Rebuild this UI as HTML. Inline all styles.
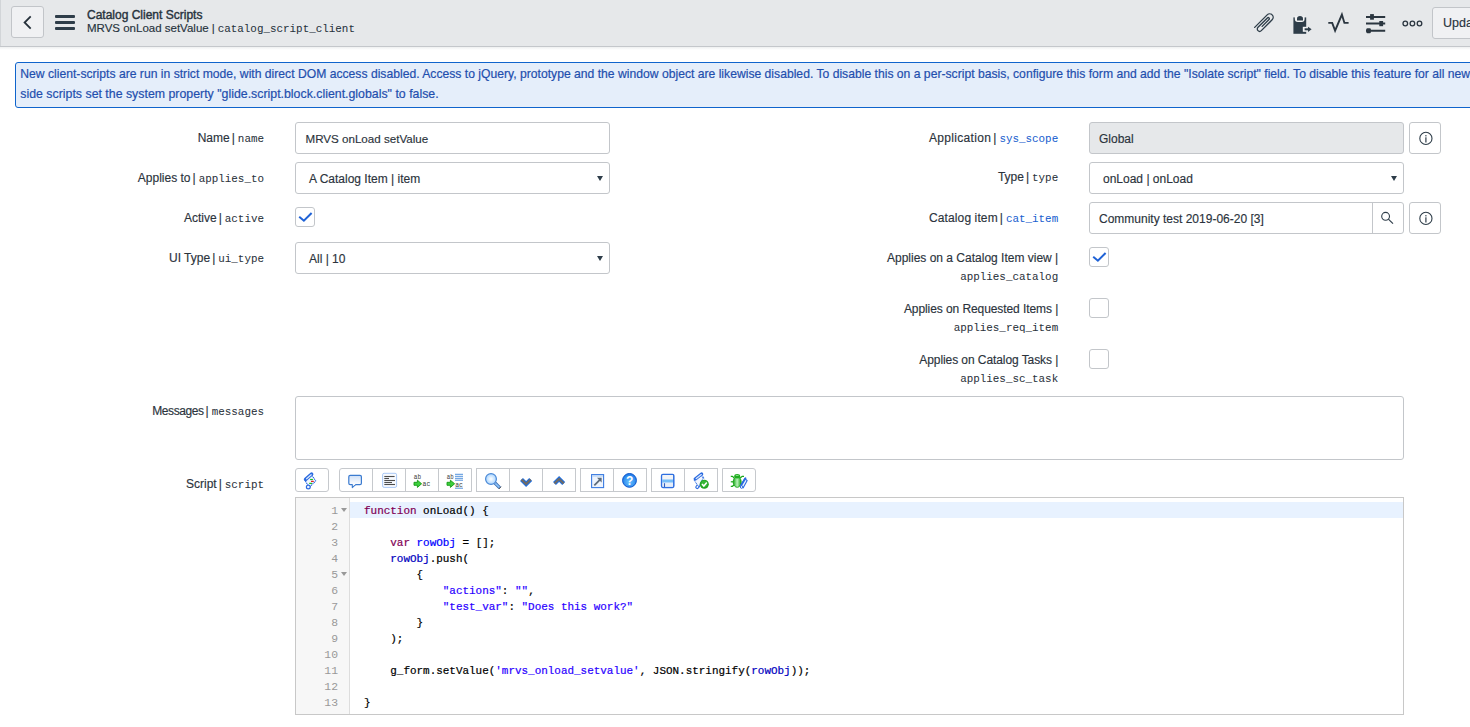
<!DOCTYPE html>
<html><head><meta charset="utf-8">
<style>
html,body{margin:0;padding:0;}
body{width:1470px;height:727px;overflow:hidden;position:relative;background:#fff;font-family:"Liberation Sans",sans-serif;color:#343d47;}
.a{position:absolute;white-space:nowrap;}
.m{font-family:"Liberation Mono",monospace;font-size:10.9px;-webkit-text-stroke-width:0.05px;}
.lbl{position:absolute;white-space:nowrap;font-size:12px;line-height:16px;text-align:right;color:#2b333c;-webkit-text-stroke:0.15px #2b333c;}
.lbl .p{padding:0 3px 0 2px;}
.ref{color:#1a5fd0;-webkit-text-stroke-color:#1a5fd0;}
.inp{position:absolute;box-sizing:border-box;height:32px;border:1px solid #c3c6ca;border-radius:3px;background:#fff;font-size:12px;line-height:16px;white-space:nowrap;color:#2b333c;-webkit-text-stroke:0.15px #2b333c;}
.arrow{position:absolute;width:0;height:0;border-left:3.3px solid transparent;border-right:3.3px solid transparent;border-top:5.8px solid #2e3d49;margin-top:-0.5px;}
.cb{position:absolute;box-sizing:border-box;width:20px;height:20px;border:1.5px solid #c3c6ca;border-radius:3px;background:#fff;}
.ibtn{position:absolute;box-sizing:border-box;width:32px;height:32px;border:1px solid #c3c6ca;border-radius:3px;background:#fff;}
.tb{position:absolute;box-sizing:border-box;top:468px;height:24px;border:1px solid #c6c9cd;background:#fff;}
.code{position:absolute;left:364px;margin-top:0.8px;font-family:"Liberation Mono",monospace;font-size:10.95px;line-height:16px;white-space:pre;color:#000;-webkit-text-stroke-width:0.2px;}
.ln{position:absolute;width:42px;left:296px;margin-top:0.6px;text-align:right;font-family:"Liberation Mono",monospace;font-size:11.4px;line-height:16px;color:#999;}
.kw{color:#7f0055;}
.v2{color:#0000c0;}
.df{color:#0000ff;}
.st{color:#2a00ff;}
</style></head>
<body>
<!-- header -->
<div class="a" style="left:0;top:0;width:1470px;height:46px;background:#e6e8ea;border-bottom:1px solid #c4c7cb;box-sizing:content-box;"></div>
<div class="a" style="left:0;top:0;width:1px;height:46px;background:#d2d5d8;"></div>
<div class="a" style="left:0;top:47px;width:1470px;height:3px;background:linear-gradient(#eef0f1,#fff);"></div>
<div class="a" style="left:11px;top:6px;width:33px;height:32px;box-sizing:border-box;border:1px solid #c2c5c9;border-radius:3px;background:#f0f1f3;"></div>
<svg class="a" style="left:0;top:0" width="100" height="46"><polyline points="30.7,16.4 24.6,22.5 30.7,28.6" fill="none" stroke="#26313b" stroke-width="1.8"/>
<rect x="55" y="15" width="20" height="3" rx="1" fill="#2e3d49"/><rect x="55" y="21" width="20" height="3" rx="1" fill="#2e3d49"/><rect x="55" y="27" width="20" height="3" rx="1" fill="#2e3d49"/></svg>
<div class="a" style="left:87px;top:8px;font-size:12px;line-height:14px;color:#27333d;-webkit-text-stroke:0.4px #27333d;">Catalog Client Scripts</div>
<div class="a" style="left:87px;top:21.2px;font-size:11.5px;line-height:14px;color:#27333d;-webkit-text-stroke:0.15px #27333d;">MRVS onLoad setValue<span style="padding:0 3px 0 3px">|</span><span class="m">catalog_script_client</span></div>

<!-- header icons -->
<svg class="a" style="left:0;top:0" width="1470" height="46">
 <!-- paperclip -->
 <g transform="translate(1264.5,22.5) rotate(-45)" fill="none" stroke="#2e3d49" stroke-width="1.35" stroke-linecap="round">
  <path d="M-10.4,-3.5 L7.3,-3.5 A3.5,3.5 0 0 1 7.3,3.5 L-8,3.5 A2.35,2.35 0 0 1 -8,-1.2 L5.3,-1.2 A1.15,1.15 0 0 1 5.3,1.1 L-4.4,1.1"/>
 </g>
 <!-- clipboard -->
 <path d="M1293.4,17.4 h12.8 v16.4 h-12.8 z" fill="#2e3d49"/>
 <path d="M1294.8,16 h9.8 v3 a3,3 0 0 1 -3,3 h-3.8 a3,3 0 0 1 -3,-3 z" fill="#f3f4f5"/>
 <path d="M1297,20.6 v-1.8 a3,2.7 0 0 1 6,0 v1.8 z" fill="#2e3d49"/>
 <rect x="1302.8" y="26.8" width="4" height="5" fill="#f3f4f5"/>
 <path d="M1304.6,29.3 h4" stroke="#2e3d49" stroke-width="2"/><path d="M1308,26.8 l3.6,2.5 l-3.6,2.6 z" fill="#2e3d49"/>
 <!-- activity -->
 <polyline points="1328.3,22.9 1332.2,22.9 1335.1,30.6 1341.9,14.6 1344.4,22.9 1348.6,22.9" fill="none" stroke="#2b3640" stroke-width="1.9" stroke-linejoin="miter"/>
 <!-- sliders -->
 <path d="M1366,17 h19.2 M1366,23.6 h19.2 M1366,30.8 h19.2" stroke="#2b3640" stroke-width="2"/>
 <rect x="1370.1" y="14.1" width="3.8" height="5.6" fill="#2b3640"/>
 <rect x="1379.3" y="21" width="3.8" height="5.2" fill="#2b3640"/>
 <rect x="1366.3" y="28.3" width="4.6" height="5" rx="1.2" fill="#2b3640"/>
 <!-- more -->
 <circle cx="1405.3" cy="23.5" r="2.3" fill="none" stroke="#2b3640" stroke-width="1.3"/>
 <circle cx="1412.4" cy="23.5" r="2.3" fill="none" stroke="#2b3640" stroke-width="1.3"/>
 <circle cx="1419.5" cy="23.5" r="2.3" fill="none" stroke="#2b3640" stroke-width="1.3"/>
</svg>
<div class="a" style="left:1432px;top:7px;width:80px;height:32px;box-sizing:border-box;border:1px solid #c2c5c9;border-radius:3px;background:#f0f1f3;"></div>
<div class="a" style="left:1443px;top:16px;font-size:12.5px;line-height:14px;color:#27333d;-webkit-text-stroke:0.15px #27333d;">Update</div>

<!-- info message -->
<div class="a" style="left:15px;top:62px;width:1500px;height:46px;box-sizing:border-box;border:1px solid #0f64cc;border-radius:3px;background:#e5eefa;"></div>
<div class="a" style="left:20.3px;top:63.7px;font-size:12.17px;line-height:20.3px;color:#1f4fae;-webkit-text-stroke:0.2px #1f4fae;">New client-scripts are run in strict mode, with direct DOM access disabled. Access to jQuery, prototype and the window object are likewise disabled. To disable this on a per-script basis, configure this form and add the "Isolate script" field. To disable this feature for all new client-</div>
<div class="a" style="left:20.3px;top:84px;font-size:12.35px;line-height:20.3px;color:#1f4fae;-webkit-text-stroke:0.2px #1f4fae;">side scripts set the system property "glide.script.block.client.globals" to false.</div>

<!-- left column labels -->
<div class="lbl" style="right:1206px;top:130px;">Name<span class="p">|</span><span class="m">name</span></div>
<div class="lbl" style="right:1206px;top:170px;">Applies to<span class="p">|</span><span class="m">applies_to</span></div>
<div class="lbl" style="right:1206px;top:210px;">Active<span class="p">|</span><span class="m">active</span></div>
<div class="lbl" style="right:1206px;top:250px;">UI Type<span class="p">|</span><span class="m">ui_type</span></div>

<div class="inp" style="left:295px;top:122px;width:315px;"><span class="a" style="left:9.5px;top:8px;font-size:11.6px;">MRVS onLoad setValue</span></div>
<div class="inp" style="left:295px;top:162px;width:315px;"><span class="a" style="left:13px;top:8px;">A Catalog Item | item</span><div class="arrow" style="left:301px;top:13px;"></div></div>
<div class="cb" style="left:295px;top:207px;"><svg width="20" height="20" style="position:absolute;left:-1.5px;top:-1.5px"><polyline points="4.2,9.7 8.9,13.7 16.6,6" fill="none" stroke="#1f62d6" stroke-width="2"/></svg></div>
<div class="inp" style="left:295px;top:242px;width:315px;"><span class="a" style="left:13px;top:8px;">All | 10</span><div class="arrow" style="left:301px;top:13px;"></div></div>

<!-- right column labels -->
<div class="lbl" style="right:411.8px;top:130px;"><span style="letter-spacing:0.33px">Application</span><span class="p">|</span><span class="m ref">sys_scope</span></div>
<div class="lbl" style="right:411.8px;top:169px;">Type<span class="p">|</span><span class="m">type</span></div>
<div class="lbl" style="right:411.8px;top:210px;"><span style="letter-spacing:0.12px">Catalog item</span><span class="p">|</span><span class="m ref">cat_item</span></div>
<div class="lbl" style="right:411.8px;top:248.9px;line-height:18.6px;">Applies on a Catalog Item view |<br><span class="m">applies_catalog</span></div>
<div class="lbl" style="right:411.8px;top:299.9px;line-height:18.6px;"><span style="letter-spacing:-0.08px">Applies on Requested Items |</span><br><span class="m">applies_req_item</span></div>
<div class="lbl" style="right:411.8px;top:350.9px;line-height:18.6px;"><span style="letter-spacing:-0.08px">Applies on Catalog Tasks |</span><br><span class="m">applies_sc_task</span></div>

<div class="inp" style="left:1089px;top:122px;width:315px;background:#e6e8ea;"><span class="a" style="left:9px;top:8px;">Global</span></div>
<div class="ibtn" style="left:1409px;top:122px;"><svg width="30" height="30" style="position:absolute;left:0;top:0"><circle cx="15.9" cy="15.4" r="6.1" fill="none" stroke="#2e3d49" stroke-width="1.1"/><rect x="15.3" y="14.3" width="1.2" height="5.2" fill="#2e3d49"/><rect x="15.3" y="12.1" width="1.2" height="1.3" fill="#2e3d49"/></svg></div>
<div class="inp" style="left:1089px;top:162px;width:315px;"><span class="a" style="left:13px;top:8px;">onLoad | onLoad</span><div class="arrow" style="left:301px;top:13px;"></div></div>
<div class="inp" style="left:1089px;top:202px;width:315px;"><span class="a" style="left:9px;top:8px;">Community test 2019-06-20 [3]</span><div class="a" style="left:281.5px;top:0;width:1px;height:30px;background:#c3c6ca;"></div>
 <svg width="30" height="30" style="position:absolute;left:283px;top:0"><circle cx="12.6" cy="13.3" r="3.9" fill="none" stroke="#2e3d49" stroke-width="1.1"/><path d="M15.4,16.1 L20,20.6" stroke="#2e3d49" stroke-width="1.2"/></svg></div>
<div class="ibtn" style="left:1409px;top:202px;"><svg width="30" height="30" style="position:absolute;left:0;top:0"><circle cx="15.9" cy="15.4" r="6.1" fill="none" stroke="#2e3d49" stroke-width="1.1"/><rect x="15.3" y="14.3" width="1.2" height="5.2" fill="#2e3d49"/><rect x="15.3" y="12.1" width="1.2" height="1.3" fill="#2e3d49"/></svg></div>
<div class="cb" style="left:1089px;top:247px;"><svg width="20" height="20" style="position:absolute;left:-1.5px;top:-1.5px"><polyline points="4.2,9.7 8.9,13.7 16.6,6" fill="none" stroke="#1f62d6" stroke-width="2"/></svg></div>
<div class="cb" style="left:1089px;top:298px;"></div>
<div class="cb" style="left:1089px;top:349px;"></div>

<!-- messages -->
<div class="lbl" style="right:1206px;top:402.5px;"><span style="letter-spacing:-0.42px">Messages</span><span class="p">|</span><span class="m">messages</span></div>
<div class="inp" style="left:295px;top:396px;width:1109px;height:64px;"></div>

<!-- script -->
<div class="lbl" style="right:1206px;top:476px;">Script<span class="p">|</span><span class="m">script</span></div>
<div class="tb" style="left:295px;width:34px;border-radius:3px;"></div>
<div class="tb" style="left:339px;width:133px;border-radius:3px 0 0 3px;"></div>
<div class="tb" style="left:476px;width:100px;border-radius:0;"></div>
<div class="tb" style="left:580px;width:67px;border-radius:0;"></div>
<div class="tb" style="left:651px;width:67px;border-radius:0;"></div>
<div class="tb" style="left:722px;width:34px;border-radius:0 3px 3px 0;"></div>
<div class="a" style="left:372px;top:469px;width:1px;height:22px;background:#c6c9cd;"></div>
<div class="a" style="left:405px;top:469px;width:1px;height:22px;background:#c6c9cd;"></div>
<div class="a" style="left:438px;top:469px;width:1px;height:22px;background:#c6c9cd;"></div>
<div class="a" style="left:509px;top:469px;width:1px;height:22px;background:#c6c9cd;"></div>
<div class="a" style="left:542px;top:469px;width:1px;height:22px;background:#c6c9cd;"></div>
<div class="a" style="left:613px;top:469px;width:1px;height:22px;background:#c6c9cd;"></div>
<div class="a" style="left:684px;top:469px;width:1px;height:22px;background:#c6c9cd;"></div>
<svg class="a" style="left:0;top:460px" width="800" height="40"><g transform="translate(0,-460)">
<defs>
 <linearGradient id="gb" x1="0" y1="0" x2="0" y2="1"><stop offset="0" stop-color="#cfe0f7"/><stop offset="1" stop-color="#ffffff"/></linearGradient>
 <radialGradient id="gm" cx="0.5" cy="0.5" r="0.55"><stop offset="0" stop-color="#ffffff"/><stop offset="1" stop-color="#9fd0ff"/></radialGradient>
 <radialGradient id="gh" cx="0.5" cy="0.6" r="0.6"><stop offset="0" stop-color="#6cc4ff"/><stop offset="1" stop-color="#1a78e8"/></radialGradient>
 <linearGradient id="gg" x1="0" y1="0" x2="1" y2="0"><stop offset="0" stop-color="#14a814"/><stop offset="0.5" stop-color="#b8f0b8"/><stop offset="1" stop-color="#14a814"/></linearGradient>
</defs>
<!-- 1 script -->
<path d="M304.8,480.2 L311.2,474.3 L315.7,480.9 L309.3,487.4 Z" fill="#f2f7ff" stroke="#2a6ae0" stroke-width="1.1" stroke-linejoin="round" stroke-dasharray="1.3,0.7"/>
<line x1="305.6" y1="479.3" x2="311.6" y2="474.2" stroke="#2a6ae0" stroke-width="3.6" stroke-linecap="round"/>
<line x1="306.6" y1="478.7" x2="311.2" y2="474.8" stroke="#d8e6fb" stroke-width="1.3" stroke-linecap="round"/>
<circle cx="308.3" cy="487" r="1.9" fill="#eef4ff" stroke="#2a6ae0" stroke-width="1.2"/>
<line x1="310.1" y1="479.5" x2="312.9" y2="479.5" stroke="#1fbf1f" stroke-width="1.2"/>
<line x1="311" y1="481.4" x2="313.8" y2="481.4" stroke="#e02020" stroke-width="1.2"/>
<line x1="309.2" y1="483.4" x2="312" y2="483.4" stroke="#1fbf1f" stroke-width="1.2"/>
<!-- 2 comment -->
<rect x="348.8" y="475.4" width="12.6" height="9.3" rx="1.4" fill="url(#gb)" stroke="#3b7bd0" stroke-width="1.2"/>
<path d="M352.3,484.6 L352.3,487.6 L355.6,484.6" fill="#fff" stroke="#3b7bd0" stroke-width="1.1" stroke-linejoin="round"/>
<rect x="352.9" y="484" width="2.2" height="1" fill="#f6f9fe"/>
<!-- 3 format -->
<rect x="382.6" y="473.3" width="14" height="14.1" rx="1.5" fill="#f7faff" stroke="#a9c8f5" stroke-width="1"/>
<g stroke="#4d4d4d" stroke-width="1.1">
<line x1="384.3" y1="476.5" x2="394.6" y2="476.5"/><line x1="384.3" y1="478.5" x2="389" y2="478.5"/>
<line x1="384.3" y1="480.5" x2="395" y2="480.5"/><line x1="384.3" y1="482.5" x2="392" y2="482.5"/>
<line x1="384.3" y1="484.5" x2="395" y2="484.5"/></g>
<!-- 4 replace -->
<text x="413.8" y="479" font-family="Liberation Mono" font-size="8" fill="#3a3a3a" textLength="7.2" lengthAdjust="spacingAndGlyphs">ab</text>
<path d="M414,482.3 L417.4,482.3 L417.4,480.2 L421.6,483.8 L417.4,487.4 L417.4,485.3 L414,485.3 Z" fill="#3ccf3c" stroke="#149a14" stroke-width="0.9" stroke-linejoin="round"/>
<text x="422.6" y="486.2" font-family="Liberation Mono" font-size="8" fill="#3a3a3a" textLength="7.6" lengthAdjust="spacingAndGlyphs">ac</text>
<!-- 5 replace all -->
<text x="446.8" y="479" font-family="Liberation Mono" font-size="8" fill="#3a3a3a" textLength="6.8" lengthAdjust="spacingAndGlyphs">ab</text>
<g stroke="#3f86d8" stroke-width="0.9"><line x1="455" y1="474.3" x2="463" y2="474.3"/><line x1="455" y1="476.3" x2="463" y2="476.3"/><line x1="455" y1="478.3" x2="463" y2="478.3"/><line x1="455" y1="480.2" x2="463" y2="480.2"/><line x1="455" y1="488.2" x2="463" y2="488.2"/></g>
<path d="M447,482.3 L450.4,482.3 L450.4,480.2 L454.6,483.8 L450.4,487.4 L450.4,485.3 L447,485.3 Z" fill="#3ccf3c" stroke="#149a14" stroke-width="0.9" stroke-linejoin="round"/>
<text x="455.2" y="486.6" font-family="Liberation Mono" font-size="8" fill="#3a3a3a" textLength="7.6" lengthAdjust="spacingAndGlyphs">ac</text>
<!-- 6 find -->
<line x1="495" y1="483" x2="499.8" y2="487.8" stroke="#3a6cb0" stroke-width="3.3" stroke-linecap="butt"/>
<line x1="495.3" y1="483.3" x2="499.5" y2="487.5" stroke="#8cc4fa" stroke-width="1.7"/>
<line x1="498.9" y1="489" x2="501.2" y2="486.7" stroke="#444" stroke-width="0.9"/>
<circle cx="491" cy="479" r="5.4" fill="url(#gm)" stroke="#4a88d6" stroke-width="1.2"/>
<!-- 7 down -->
<polyline points="521.5,479.5 526.1,484 530.7,479.5" fill="none" stroke="#1f6fe0" stroke-width="4.2" stroke-linejoin="miter"/>
<polyline points="521.5,479.5 526.1,484 530.7,479.5" fill="none" stroke="#6e6a66" stroke-width="2.2"/>
<!-- 8 up -->
<polyline points="554.5,483.5 559.1,479 563.7,483.5" fill="none" stroke="#1f6fe0" stroke-width="4.2" stroke-linejoin="miter"/>
<polyline points="554.5,483.5 559.1,479 563.7,483.5" fill="none" stroke="#6e6a66" stroke-width="2.2"/>
<!-- 9 fullscreen -->
<rect x="591.6" y="474.6" width="12" height="13" fill="#eef4fd" stroke="#3b7be0" stroke-width="1.1"/>
<rect x="592.2" y="475.2" width="10.8" height="1.5" fill="#bcd6f6"/>
<line x1="594.3" y1="485.3" x2="599.8" y2="479.8" stroke="#5d6b7a" stroke-width="1.8"/>
<path d="M597,477.8 L601.6,477.8 L601.6,482.4 Z" fill="#5d6b7a"/>
<!-- 10 help -->
<circle cx="629.5" cy="480.4" r="6.9" fill="url(#gh)" stroke="#0d55cc" stroke-width="1"/>
<text x="629.6" y="484.9" text-anchor="middle" font-family="Liberation Sans" font-weight="bold" font-size="12" fill="#fff">?</text>
<!-- 11 save -->
<rect x="661.6" y="474.4" width="12.2" height="13" rx="1.3" fill="#eaf2fc" stroke="#2f6fe0" stroke-width="1.5"/>
<rect x="662.5" y="475" width="10.4" height="4.6" fill="#f2f4f7"/>
<rect x="662.4" y="479.5" width="10.6" height="3.2" fill="#74bdf8"/>
<rect x="662.5" y="482.7" width="10.4" height="4" fill="#e6eefa"/>
<line x1="664.5" y1="483.2" x2="664.5" y2="487" stroke="#2f5fc0" stroke-width="1.1"/>
<!-- 12 validate -->
<path d="M694.4,479.4 L701,473.8 L703.6,477.2 L698.6,486.8 L694.4,480.6 Z" fill="#f2f7ff" stroke="#2a6ae0" stroke-width="1" stroke-linejoin="round" stroke-dasharray="1.2,0.6"/>
<line x1="695.3" y1="479" x2="701.6" y2="474" stroke="#2a6ae0" stroke-width="3.4" stroke-linecap="round"/>
<line x1="696.2" y1="478.6" x2="701.3" y2="474.6" stroke="#d8e6fb" stroke-width="1.3" stroke-linecap="round"/>
<line x1="701.8" y1="476.5" x2="703.8" y2="478.6" stroke="#2a6ae0" stroke-width="0.9"/>
<path d="M697.4,484.8 L696,486.5 A1.3,1.3 0 0 0 698.4,487.8 L700,486" fill="none" stroke="#2a6ae0" stroke-width="1.1"/>
<circle cx="704.3" cy="484.2" r="4.5" fill="#22a422"/>
<circle cx="704.3" cy="483.8" r="3.2" fill="#36b836"/>
<polyline points="702,484 703.8,486 706.8,482.4" fill="none" stroke="#fff" stroke-width="1.5"/>
<!-- 13 debug -->
<g stroke="#19a819" stroke-width="1.2" fill="none"><polyline points="730.8,476.3 732.4,476.3 734.3,478"/><polyline points="744,476.3 742.2,476.3 740.2,478"/>
<line x1="730.8" y1="481.8" x2="733.6" y2="481.8"/><polyline points="730.8,486.3 732.4,486.3 734,485"/></g>
<ellipse cx="737.2" cy="482" rx="4" ry="5.3" fill="url(#gg)" stroke="#1aa01a" stroke-width="0.9"/>
<ellipse cx="737.2" cy="476.3" rx="3" ry="2.2" fill="#1fae1f"/>
<rect x="735.8" y="475" width="2.8" height="0.9" fill="#8fe08f"/>
<path d="M740.8,485.5 L745,478.6 L747.2,480.6 L743.2,487.8 Z" fill="#eaf2ff" stroke="#2a6ae0" stroke-width="1.1" stroke-linejoin="round"/>
<line x1="741.4" y1="484.8" x2="745.4" y2="478.3" stroke="#2a6ae0" stroke-width="2" stroke-linecap="round"/>
<circle cx="741.6" cy="487" r="1.3" fill="#fff" stroke="#2a6ae0" stroke-width="1"/>
</g></svg>

<!-- editor -->
<div class="a" style="left:295px;top:497px;width:1109px;height:218px;box-sizing:border-box;border:1px solid #c8c8c8;background:#fff;"></div>
<div class="a" style="left:296px;top:498px;width:53px;height:216px;background:#f7f7f7;border-right:1px solid #ddd;"></div>
<div class="a" style="left:350px;top:502px;width:1053px;height:16px;background:#e8f2ff;"></div>
<div class="ln" style="top:502px;">1</div>
<div class="code" style="top:502px;"><span class="kw">function</span> onLoad() {</div>
<div class="ln" style="top:518px;">2</div>
<div class="ln" style="top:534px;">3</div>
<div class="code" style="top:534px;">    <span class="kw">var</span> <span class="df">rowObj</span> = [];</div>
<div class="ln" style="top:550px;">4</div>
<div class="code" style="top:550px;">    <span class="v2">rowObj</span>.push(</div>
<div class="ln" style="top:566px;">5</div>
<div class="code" style="top:566px;">        {</div>
<div class="ln" style="top:582px;">6</div>
<div class="code" style="top:582px;">            <span class="st">"actions"</span>: <span class="st">""</span>,</div>
<div class="ln" style="top:598px;">7</div>
<div class="code" style="top:598px;">            <span class="st">"test_var"</span>: <span class="st">"Does this work?"</span></div>
<div class="ln" style="top:614px;">8</div>
<div class="code" style="top:614px;">        }</div>
<div class="ln" style="top:630px;">9</div>
<div class="code" style="top:630px;">    );</div>
<div class="ln" style="top:646px;">10</div>
<div class="ln" style="top:662px;">11</div>
<div class="code" style="top:662px;">    g_form.setValue(<span class="st">'mrvs_onload_setvalue'</span>, JSON.stringify(<span class="v2">rowObj</span>));</div>
<div class="ln" style="top:678px;">12</div>
<div class="ln" style="top:694px;">13</div>
<div class="code" style="top:694px;">}</div>
<div class="a" style="left:341px;top:508px;width:0;height:0;border-left:3px solid transparent;border-right:3px solid transparent;border-top:4px solid #999;"></div>
<div class="a" style="left:341px;top:572px;width:0;height:0;border-left:3px solid transparent;border-right:3px solid transparent;border-top:4px solid #999;"></div>
</body></html>
